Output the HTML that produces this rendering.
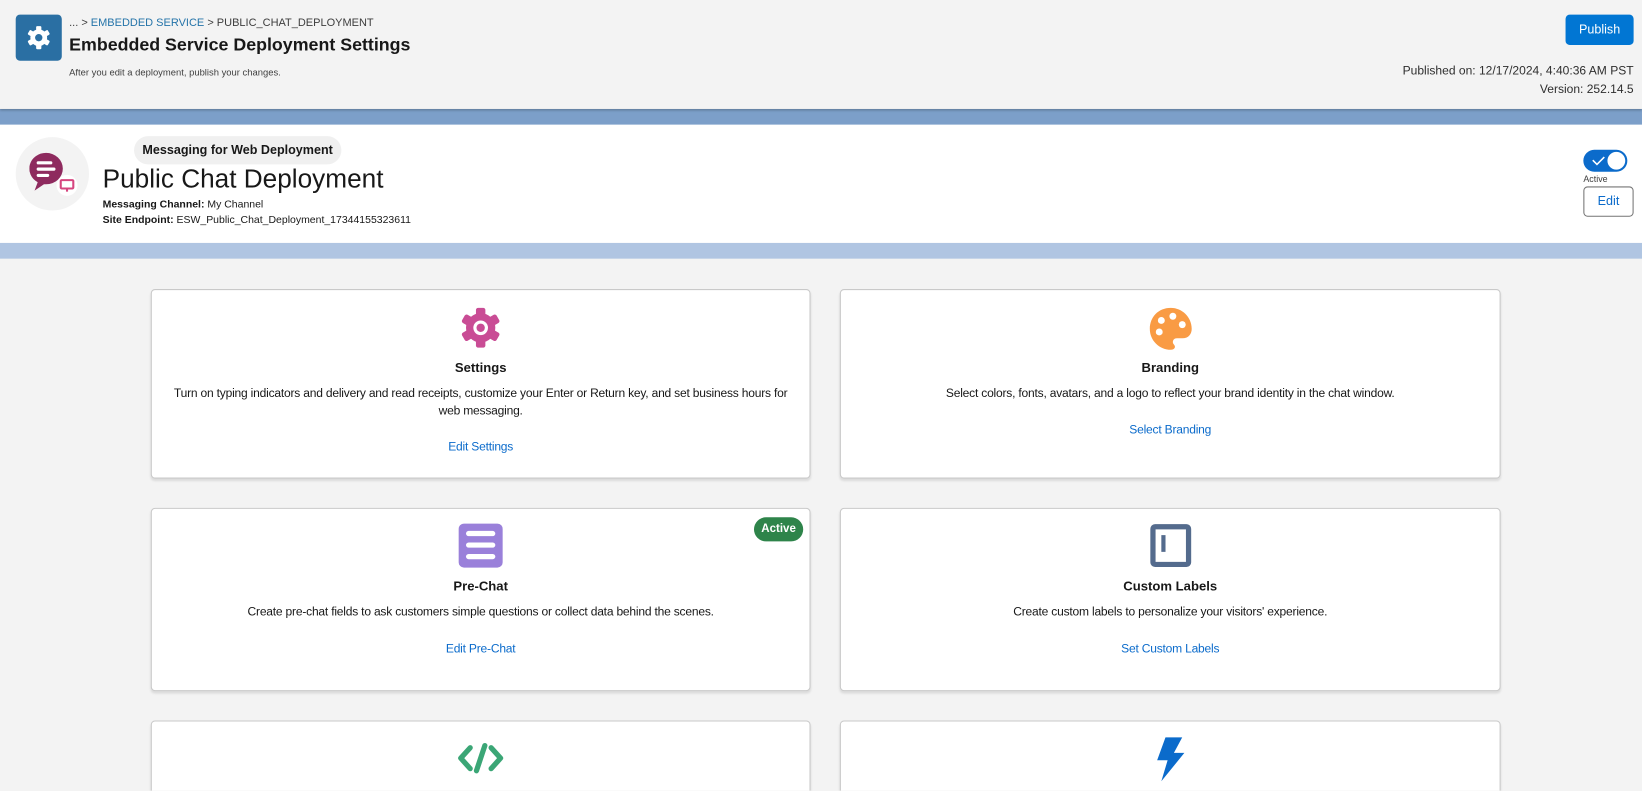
<!DOCTYPE html>
<html><head><meta charset="utf-8"><style>
*{box-sizing:border-box;margin:0;padding:0}
html,body{width:1642px;height:791px;overflow:hidden;background:#f3f3f3}
body{font-family:"Liberation Sans",sans-serif;color:#181818;position:relative}
#w{position:absolute;left:0;top:0;width:1568px;height:755px;overflow:hidden;transform:scale(1.04719);transform-origin:0 0}
.hdr{position:absolute;left:0;top:0;width:1568px;height:104px;background:#f3f3f3;box-shadow:0 2px 2px rgba(0,0,0,.2);z-index:2}
.band1{position:absolute;left:0;top:104px;width:1568px;height:16px;background:#7c9fc9}
.band2{position:absolute;left:0;top:232px;width:1568px;height:15px;background:#b0c5e2}
.dep{position:absolute;left:0;top:119px;width:1568px;height:113px;background:#fff;box-shadow:0 2px 2px rgba(0,0,0,.15)}
.card{position:absolute;background:#fff;border:1px solid #c9c9c9;border-radius:4px;box-shadow:0 2px 2px rgba(0,0,0,.1);text-align:center}
.card h3{font-size:12.5px;font-weight:bold;margin-top:0}
.card p{font-size:11.5px;line-height:17px;color:#181818;letter-spacing:-0.2px}
.card a{font-size:11.5px;color:#0b6bcb;text-decoration:none;letter-spacing:-0.2px}
.ic{position:absolute;left:50%;transform:translateX(-50%)}
</style></head><body><div id="w">
<div class="hdr">
 <div style="position:absolute;left:15px;top:14px;width:44px;height:44px;background:#2a6fa3;border-radius:4px">
  <svg width="44" height="44" viewBox="0 0 44 44"><g transform="translate(22,22)" fill="#fff"><circle r="8"/><g><rect x="-2.5" y="-11" width="5" height="22" rx="1"/><rect x="-2.5" y="-11" width="5" height="22" rx="1" transform="rotate(60)"/><rect x="-2.5" y="-11" width="5" height="22" rx="1" transform="rotate(120)"/></g><circle r="3.5" fill="#2a6fa3"/></g></svg>
 </div>
 <div style="position:absolute;left:66px;top:16px;font-size:10.5px;color:#3e3e3e">... &gt; <span style="color:#2574a9">EMBEDDED SERVICE</span> &gt; PUBLIC_CHAT_DEPLOYMENT</div>
 <div style="position:absolute;left:66px;top:33px;font-size:17px;font-weight:bold">Embedded Service Deployment Settings</div>
 <div style="position:absolute;left:66px;top:64px;font-size:9px;color:#3e3e3e">After you edit a deployment, publish your changes.</div>
 <div style="position:absolute;left:1495px;top:14px;width:65px;height:29px;background:#0176d3;border-radius:4px;color:#fff;font-size:12px;text-align:center;line-height:29px">Publish</div>
 <div style="position:absolute;right:8px;top:59px;font-size:11.5px;color:#2e2e2e;text-align:right;line-height:18px">Published on: 12/17/2024, 4:40:36 AM PST<br>Version: 252.14.5</div>
</div>
<div class="band1"></div>
<div class="dep">
 <div style="position:absolute;left:15px;top:12px;width:70px;height:70px;border-radius:50%;background:#f3f3f3"></div>
 <svg style="position:absolute;left:28px;top:26px" width="50" height="50" viewBox="0 0 50 50"><path d="M16 1a16 15 0 1 1 0 30h-2l-9 6 3-8a16 15 0 0 1 8-28z" fill="#8e2a5e"/><rect x="7" y="9" width="15" height="3" rx="1.5" fill="#fff"/><rect x="7" y="15" width="18" height="3" rx="1.5" fill="#fff"/><rect x="7" y="21" width="12" height="3" rx="1.5" fill="#fff"/><circle cx="36" cy="32" r="10" fill="#fff"/><rect x="30" y="27" width="12" height="8" rx="1" fill="none" stroke="#d6457f" stroke-width="2"/><rect x="35" y="35" width="2" height="3" fill="#d6457f"/></svg>
 <div style="position:absolute;left:128px;top:11px;height:27px;padding:0 8px;background:#f0f0f0;border-radius:14px;font-size:12px;font-weight:bold;line-height:27px">Messaging for Web Deployment</div>
 <div style="position:absolute;left:98px;top:38px;font-size:25px;font-weight:normal">Public Chat Deployment</div>
 <div style="position:absolute;left:98px;top:69px;font-size:10px;line-height:15px"><b>Messaging Channel:</b> My Channel<br><b>Site Endpoint:</b> ESW_Public_Chat_Deployment_17344155323611</div>
 <div style="position:absolute;left:1512px;top:24px;width:42px;height:21px;background:#0b6bcb;border-radius:11px"><svg width="20" height="21" style="position:absolute;left:5px;top:0"><path d="M4 10l4 4 7-7" stroke="#fff" stroke-width="1.5" fill="none"/></svg><div style="position:absolute;right:2px;top:2px;width:17px;height:17px;border-radius:50%;background:#fff"></div></div>
 <div style="position:absolute;left:1512px;top:47px;font-size:8.5px;color:#3e3e3e">Active</div>
 <div style="position:absolute;left:1512px;top:59px;width:48px;height:29px;border:1px solid #747474;border-radius:4px;font-size:12px;color:#0b6bcb;text-align:center;line-height:27px">Edit</div>
</div>
<div class="band2"></div>

<div class="card" style="left:144px;top:276px;width:630px;height:181px">
 <svg class="ic" style="top:16px" width="40" height="40" viewBox="0 0 40 40"><g transform="translate(20,20)" fill="#c94c95"><circle r="14"/><rect x="-4.5" y="-19" width="9" height="38" rx="2"/><rect x="-4.5" y="-19" width="9" height="38" rx="2" transform="rotate(60)"/><rect x="-4.5" y="-19" width="9" height="38" rx="2" transform="rotate(120)"/><circle r="7" fill="#fff"/><circle r="4"/></g></svg>
 <h3 style="margin-top:67px">Settings</h3>
 <p style="margin-top:10px;padding:0 10px">Turn on typing indicators and delivery and read receipts, customize your Enter or Return key, and set business hours for web messaging.</p>
 <div style="margin-top:15px"><a>Edit Settings</a></div>
</div>
<div class="card" style="left:802px;top:276px;width:631px;height:181px">
 <svg class="ic" style="top:15px" width="44" height="44" viewBox="0 0 44 44"><path d="M22 2C10 2 2 11 2 22s9 20 20 20c4 0 5-3 3-5s-1-6 3-6h5c6 0 9-4 9-9C42 11 33 2 22 2z" fill="#f99b44"/><circle cx="13" cy="14" r="3.3" fill="#fff"/><circle cx="24" cy="10" r="3.3" fill="#fff"/><circle cx="11" cy="25" r="3.3" fill="#fff"/><circle cx="33" cy="18" r="3.3" fill="#fff"/></svg>
 <h3 style="margin-top:67px">Branding</h3>
 <p style="margin-top:10px">Select colors, fonts, avatars, and a logo to reflect your brand identity in the chat window.</p>
 <div style="margin-top:16px"><a>Select Branding</a></div>
</div>
<div class="card" style="left:144px;top:485px;width:630px;height:175px">
 <svg class="ic" style="top:13px" width="44" height="44" viewBox="0 0 44 44"><rect x="1" y="1" width="42" height="42" rx="5" fill="#9a80da"/><rect x="8" y="8" width="28" height="5" rx="2.5" fill="#fff"/><rect x="8" y="19" width="28" height="5" rx="2.5" fill="#fff"/><rect x="8" y="30" width="28" height="5" rx="2.5" fill="#fff"/></svg>
 <div style="position:absolute;left:575px;top:8px;width:47px;height:23px;background:#2e844a;border-radius:12px;color:#fff;font-size:11px;font-weight:bold;line-height:23px">Active</div>
 <h3 style="margin-top:67px">Pre-Chat</h3>
 <p style="margin-top:10px">Create pre-chat fields to ask customers simple questions or collect data behind the scenes.</p>
 <div style="margin-top:16px"><a>Edit Pre-Chat</a></div>
</div>
<div class="card" style="left:802px;top:485px;width:631px;height:175px">
 <svg class="ic" style="top:14px" width="40" height="42" viewBox="0 0 40 42"><rect x="3" y="3" width="34" height="36" rx="2" fill="none" stroke="#546b8d" stroke-width="5"/><rect x="11" y="11" width="4" height="16" fill="#546b8d"/></svg>
 <h3 style="margin-top:67px">Custom Labels</h3>
 <p style="margin-top:10px">Create custom labels to personalize your visitors' experience.</p>
 <div style="margin-top:16px"><a>Set Custom Labels</a></div>
</div>
<div class="card" style="left:144px;top:688px;width:630px;height:80px">
 <svg class="ic" style="top:20px" width="44" height="30" viewBox="0 0 44 30"><path d="M12 5L3 15l9 10M32 5l9 10-9 10M26 3l-8 24" stroke="#3ba676" stroke-width="5" fill="none" stroke-linecap="round" stroke-linejoin="round"/></svg>
</div>
<div class="card" style="left:802px;top:688px;width:631px;height:80px">
 <svg class="ic" style="top:15px" width="30" height="42" viewBox="0 0 30 42"><path d="M10 0h16l-8 15h10L6 42l6-20H2z" fill="#0b6bcb"/></svg>
</div>
</div></body></html>
